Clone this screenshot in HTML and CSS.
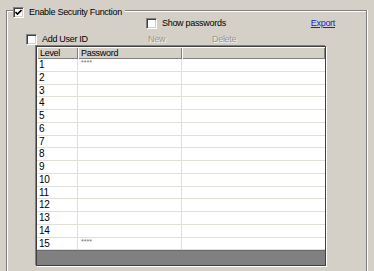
FILE: index.html
```html
<!DOCTYPE html>
<html lang="en">
<head>
    <meta charset="UTF-8">
    <title>Security</title>
    <link rel="stylesheet" href="styles.css">
</head>
<body>
    <div class="group">
        <label class="legend">
            <span class="cb"><svg width="7" height="7" viewBox="0 0 7 7"><path d="M0.5 3 L2.5 5 L6.5 1" fill="none" stroke="#000" stroke-width="1.6"/></svg></span>
            Enable Security Function
        </label>

        <div class="opts">
            <label class="check"><span class="cb"></span>Show passwords</label>
            <a class="export" href="#">Export</a>
        </div>

        <div class="actions">
            <label class="check"><span class="cb"></span>Add User ID</label>
            <span class="btn-off">New</span>
            <span class="btn-off">Delete</span>
        </div>

        <!-- user list -->
        <div class="list">
            <div class="list-head">
                <div class="hd">Level</div>
                <div class="hd">Password</div>
                <div class="hd"></div>
            </div>
            <div class="list-row"><div>1</div><div class="pw">****</div><div></div></div>
            <div class="list-row"><div>2</div><div></div><div></div></div>
            <div class="list-row"><div>3</div><div></div><div></div></div>
            <div class="list-row"><div>4</div><div></div><div></div></div>
            <div class="list-row"><div>5</div><div></div><div></div></div>
            <div class="list-row"><div>6</div><div></div><div></div></div>
            <div class="list-row"><div>7</div><div></div><div></div></div>
            <div class="list-row"><div>8</div><div></div><div></div></div>
            <div class="list-row"><div>9</div><div></div><div></div></div>
            <div class="list-row"><div>10</div><div></div><div></div></div>
            <div class="list-row"><div>11</div><div></div><div></div></div>
            <div class="list-row"><div>12</div><div></div><div></div></div>
            <div class="list-row"><div>13</div><div></div><div></div></div>
            <div class="list-row"><div>14</div><div></div><div></div></div>
            <div class="list-row"><div>15</div><div class="pw">****</div><div></div></div>
            <div class="list-fill"></div>
        </div>
    </div>
</body>
</html>
```

FILE: styles.css
```css
body {
    margin: 0;
    background-color: #d4d0c8;
    font-family: "Liberation Sans", Arial, sans-serif;
    font-size: 9px;
    letter-spacing: -0.3px;
    line-height: 12px;
    color: #000;
    height: 271px;
    overflow: hidden;
}

/* frame runs off the bottom of the window, so no bottom edge */
.group {
    position: relative;
    margin: 10px 0 0 6px;
    width: 359px;
    height: 254px;
    border: 1px solid #808080;
    border-bottom: none;
    box-shadow: inset 1px 1px #fff, 1px 0 #fff;
    padding-top: 6px;
    box-sizing: content-box;
}

/* title sits on top of the frame line */
.legend {
    position: absolute;
    left: 6px;
    top: -5px;
    display: flex;
    align-items: center;
    gap: 5px;
    padding-right: 3px;
    background-color: #d4d0c8;
}

.cb {
    width: 11px;
    height: 11px;
    box-sizing: border-box;
    background-color: #fff;
    border: 1px solid;
    border-color: #808080 #fff #fff #808080;
    box-shadow: inset 1px 1px #404040, inset -1px -1px #d4d0c8;
    display: flex;
    align-items: center;
    justify-content: center;
}

.check {
    display: flex;
    align-items: center;
    gap: 5px;
}

.opts {
    display: flex;
    align-items: center;
    height: 12px;
    padding-left: 139px;
    padding-right: 31px;
}

.export {
    margin-left: auto;
    color: #1a22d4;
    text-decoration: underline;
}

.actions {
    display: grid;
    grid-template-columns: 122px 64px 1fr;
    align-items: center;
    height: 12px;
    margin-top: 4px;
    padding-left: 19px;
}

.btn-off {
    color: #9a968e;
    text-shadow: 1px 1px #f4f2ee;
}

.list {
    margin: 1px 0 0 29px;
    width: 290px;
    height: 220px;
    box-sizing: border-box;
    border: 1px solid #404040;
    box-shadow: -1px -1px #808080, 1px 1px #fff;
    display: flex;
    flex-direction: column;
    background-color: #fff;
}

.list-head,
.list-row {
    display: grid;
    grid-template-columns: 41px 104px 1fr;
}

.list-head {
    height: 12px;
}

.hd {
    background-color: #d4d0c8;
    box-shadow: inset 1px 1px #fff, inset -1px -1px #808080;
    padding-left: 3px;
    line-height: 12px;
}

.list-row {
    height: 12.75px;
    box-sizing: border-box;
    border-bottom: 1px solid #e2dfd9;
}

.list-row div {
    border-right: 1px solid #e2dfd9;
    padding-left: 2px;
    line-height: 12px;
    font-size: 10px;
}

.list-row div:last-child {
    border-right: none;
}

.list-row .pw {
    padding-left: 3px;
    font-size: 7px;
    line-height: 8px;
    color: #707070;
    letter-spacing: 0;
}

.list-fill {
    flex: 1;
    background-color: #808080;
    border-top: 1px solid #6a6a6a;
}
```
